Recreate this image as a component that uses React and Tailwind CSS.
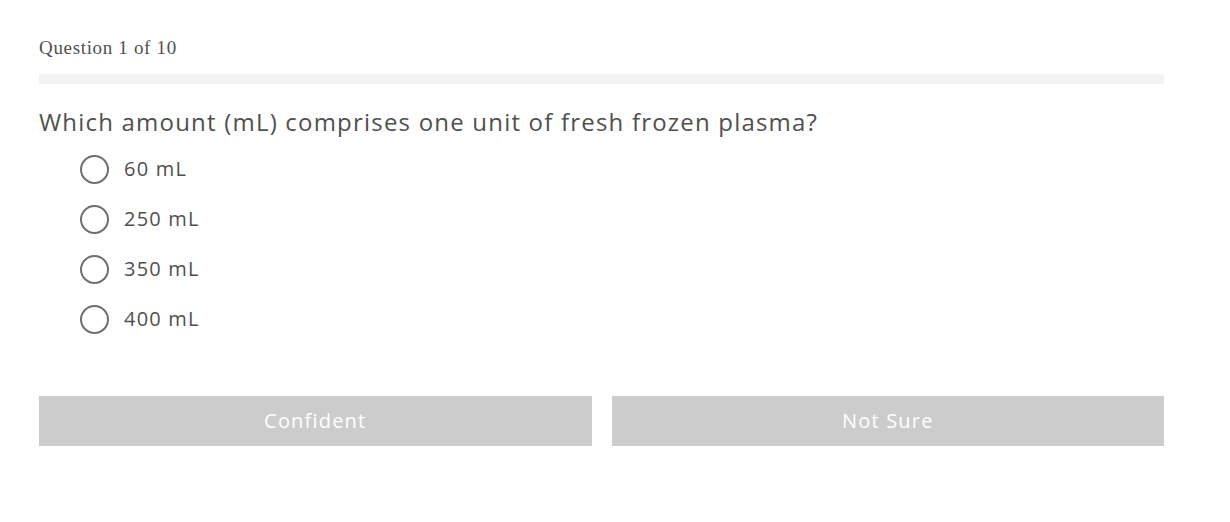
import { useState } from 'react'

const options = ['60 mL', '250 mL', '350 mL', '400 mL']

export default function App() {
  const [picked, setPicked] = useState(null)

  return (
    <div className="min-h-screen bg-white px-[39px] pt-[37px] text-[#505050]" style={{ fontFamily: '"Open Sans", "Noto Sans", sans-serif' }}>
      {/* Header */}
      <p className="text-[19px] leading-[22px] tracking-[0.035em] text-[#505050]" style={{ fontFamily: '"Liberation Serif", serif' }}>
        Question 1 of 10
      </p>
      <div className="mt-[15px] h-[10px] w-[1125px] bg-[#f3f3f3]" />

      {/* Question */}
      <h2 className="mt-[20px] text-[24px] leading-[36px] tracking-[0.05em] text-[#505050]">
        Which amount (mL) comprises one unit of fresh frozen plasma?
      </h2>

      <div className="mt-[4px] flex flex-col">
        {options.map((opt, i) => (
          <label key={opt} className="flex h-[50px] cursor-pointer items-center pl-[41px]">
            <span className="flex h-[29px] w-[29px] items-center justify-center rounded-full border-2 border-[#6f6f6f]">
              {picked === i && <span className="h-[15px] w-[15px] rounded-full bg-[#6f6f6f]" />}
            </span>
            <input type="radio" name="q1" className="hidden" onChange={() => setPicked(i)} />
            <span className="ml-[15px] text-[20px] tracking-[0.06em] text-[#505050]">{opt}</span>
          </label>
        ))}
      </div>

      {/* Actions */}
      <div className="mt-[52px] grid w-[1125px] grid-cols-2 gap-[20px]">
        <button className="h-[50px] bg-[#cccccc] text-[20px] tracking-[0.06em] text-white">Confident</button>
        <button className="h-[50px] bg-[#cccccc] text-[20px] tracking-[0.06em] text-white">Not Sure</button>
      </div>
    </div>
  )
}
